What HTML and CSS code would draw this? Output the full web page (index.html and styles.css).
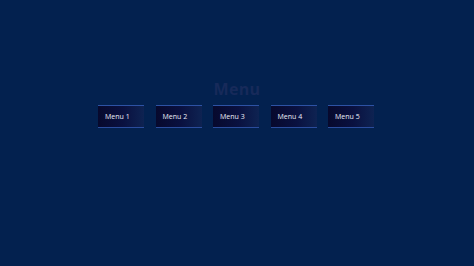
FILE: index.html
```html
<!DOCTYPE html>
<html>
<head>
<meta charset="utf-8">
<link rel="stylesheet" href="styles.css">
</head>
<body>
<div class="page">
  <h1 class="title">Menu</h1>
  <nav class="menu">
    <a class="item">Menu 1</a>
    <a class="item">Menu 2</a>
    <a class="item">Menu 3</a>
    <a class="item">Menu 4</a>
    <a class="item">Menu 5</a>
  </nav>
</div>
</body>
</html>
```
FILE: styles.css
```css
html, body {
  margin: 0;
  padding: 0;
  width: 474px;
  height: 266px;
  background: #03214f;
  overflow: hidden;
}
.page {
  display: flex;
  flex-direction: column;
  align-items: center;
  padding-top: 79px;
  font-family: "Open Sans", "DejaVu Sans", sans-serif;
}
.title {
  margin: 0;
  font-family: "Open Sans", "DejaVu Sans", sans-serif;
  font-size: 16px;
  font-weight: 700;
  line-height: 20px;
  color: #172a5a;
  letter-spacing: 0.3px;
}
.menu {
  display: flex;
  gap: 11.5px;
  margin-top: 6px;
  margin-left: -2px;
}
.item {
  box-sizing: border-box;
  width: 46px;
  height: 23px;
  display: flex;
  align-items: center;
  padding-left: 7px;
  font-size: 7px;
  color: #eceef8;
  background: linear-gradient(90deg, #07092d 0%, #0a1140 55%, #0e2352 100%);
  border-top: 1px solid #2d52a4;
  border-bottom: 1px solid #2a4c9c;
}
```
